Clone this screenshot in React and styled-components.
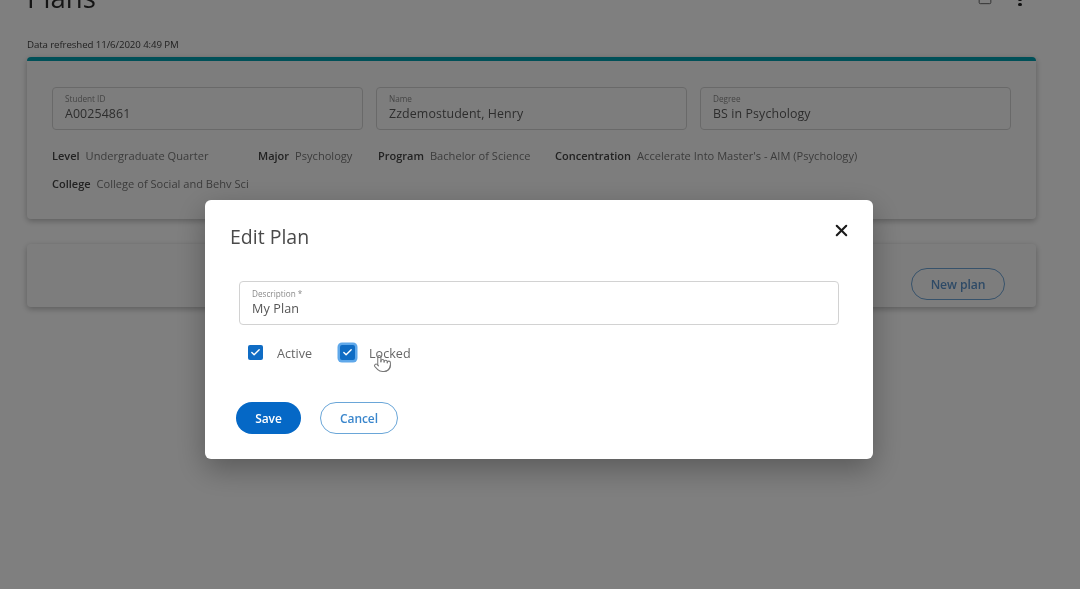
import React from "react";
import styled, { createGlobalStyle } from "styled-components";
import { X, Pointer, Check, Mail } from "lucide-react";

const Global = createGlobalStyle`
  html, body { margin: 0; height: 100%; overflow: hidden; background: #fff; }
  body { font-family: "Open Sans", "Noto Sans", sans-serif; color: #2b2b2b; }
`;
const Page = styled.div`
  width: 1080px; height: 589px; box-sizing: border-box; padding: 0 44px 0 27px; overflow: hidden;
  filter: blur(0.5px);
`;
const Header = styled.header`
  display: flex; align-items: flex-end; justify-content: space-between; height: 30px; margin-top: -22px;
`;
const Title = styled.h1`
  margin: 0; font-size: 27.5px; font-weight: 400; line-height: 20px; color: #2a2a2a;
`;
const HeaderTools = styled.div`
  display: flex; align-items: flex-end; gap: 26px; margin-right: 14px; margin-bottom: 2px; color: #444;
`;
const Dots = styled.span`
  display: flex; flex-direction: column; gap: 1.6px; width: 4px; align-items: center;
  i { width: 3.2px; height: 3.2px; border-radius: 50%; background: #222; display: block; }
`;
const Refreshed = styled.p`
  margin: 30px 0 0; font-size: 9.7px; line-height: 13px; color: #444; letter-spacing: -0.1px;
`;
const Card = styled.section`
  margin-top: ${p => p.$top}px; box-sizing: border-box; height: ${p => p.$h}px; background: #fbfbfb; border-radius: 4px;
  border-top: ${p => (p.$accent ? "4px solid #00a0b0" : "0")};
  box-shadow: 0 2px 6px rgba(0,0,0,.28);
`;
const InfoBody = styled.div`
  padding: 26px 25px 0;
`;
const Fields = styled.div`
  display: grid; grid-template-columns: repeat(3, 311px); gap: 13px;
`;
const Field = styled.div`
  box-sizing: border-box; height: ${p => p.$h || 43}px; border: 1px solid #d3d3d3; border-radius: 4px;
  padding: 6px 12px;
`;
const FieldLabel = styled.div`
  font-size: 8.2px; line-height: 10px; color: #8a8a8a;
`;
const FieldValue = styled.div`
  font-size: 12.4px; line-height: 19px; color: #5a5a5a; letter-spacing: 0.1px;
`;
const Details = styled.div`
  display: flex; margin-top: 19px; height: 14px; align-items: center;
`;
const DetailsRow2 = styled(Details)`
  margin-top: 14px;
`;
const Detail = styled.div`
  width: ${p => (p.$w ? `${p.$w}px` : "auto")}; font-size: 11.1px; line-height: 14px; color: #777; white-space: nowrap;
  b { color: #444; font-weight: 600; font-size: 11px; margin-right: 6px; }
`;
const ActionBody = styled.div`
  display: flex; justify-content: flex-end; padding: 24px 31px 0 0;
`;
const Pill = styled.button`
  box-sizing: border-box; width: ${p => p.$w}px; height: ${p => p.$h}px; border-radius: 17px; font: 600 12px "Open Sans", sans-serif;
  letter-spacing: -0.1px; padding: 0;
  color: ${p => (p.$solid ? "#fff" : "#3a86cc")};
  background: ${p => (p.$solid ? "#0568c6" : "transparent")};
  border: ${p => (p.$solid ? "0" : "1.5px solid #6aa6d8")};
`;
const NewPlan = styled(Pill)`
  color: #5c94cc; border-color: #6ea4d6; font-size: 12.2px;
`;
const Overlay = styled.div`
  position: fixed; inset: 0; background: rgba(0,0,0,.5); display: flex; justify-content: flex-start;
  padding: 200px 0 0 205px;
`;
const Dialog = styled.div`
  position: relative; box-sizing: border-box; width: 668px; height: 259px; background: #fff; border-radius: 6px;
  box-shadow: 0 10px 30px rgba(0,0,0,.3); padding: 23px 25px 0 31px; filter: blur(0.4px);
`;
const DialogTitle = styled.h2`
  margin: 0 0 0 -6px; font-size: 19.5px; line-height: 27px; font-weight: 400; color: #4a4a4a;
`;
const CloseBtn = styled.button`
  position: absolute; top: 19px; right: 21px; width: 22px; height: 22px; padding: 0; border: 0; background: none; color: #1a1a1a;
  display: flex; align-items: center; justify-content: center;
`;
const DescField = styled(Field)`
  width: 600px; margin: 31px 0 0 3px; border-width: 1.5px; border-color: #d2d2d2; padding: 7px 12px;
`;
const DescLabel = styled(FieldLabel)`
  color: #8a8a8a;
`;
const DescValue = styled(FieldValue)`
  color: #555; font-size: 12.6px; line-height: 18px; margin-top: 1px;
`;
const Checks = styled.div`
  display: flex; align-items: center; margin: 19px 0 0 12px; height: 18px;
`;
const Box = styled.span`
  box-sizing: border-box; width: 15px; height: 15px; background: #0f6cc4; border-radius: 2px; color: #fff;
  display: flex; align-items: center; justify-content: center; flex: none; margin-bottom: 1px;
  box-shadow: ${p => (p.$focus ? "0 0 0 2.5px #5fa8ea" : "none")};
`;
const CheckLabel = styled.span`
  position: relative; font-size: 12.6px; line-height: 16px; color: #666; margin-left: 14px; padding-top: 2px;
  margin-right: ${p => p.$mr || 0}px;
`;
const Hand = styled.span`
  position: absolute; left: 4px; top: 10px; color: #777; display: flex;
`;
const Buttons = styled.div`
  display: flex; align-items: center; gap: 19px; margin: 40px 0 0 0;
`;

const Item = ({ k, v, w }) => (<Detail $w={w}><b>{k}</b>{v}</Detail>);

export default function App() {
  return (
    <>
      <Global />
      <Page>
        <Header>
          <Title>Plans</Title>
          <HeaderTools>
            <Mail size={14} strokeWidth={1.4} />
            <Dots><i /><i /><i /></Dots>
          </HeaderTools>
        </Header>
        <Refreshed>Data refreshed 11/6/2020 4:49 PM</Refreshed>
        <Card $top={6} $h={162} $accent>
          <InfoBody>
            <Fields>
              <Field><FieldLabel>Student ID</FieldLabel><FieldValue>A00254861</FieldValue></Field>
              <Field><FieldLabel>Name</FieldLabel><FieldValue>Zzdemostudent, Henry</FieldValue></Field>
              <Field><FieldLabel>Degree</FieldLabel><FieldValue>BS in Psychology</FieldValue></Field>
            </Fields>
            <Details>
              <Item k="Level" v="Undergraduate Quarter" w={206} />
              <Item k="Major" v="Psychology" w={120} />
              <Item k="Program" v="Bachelor of Science" w={177} />
              <Item k="Concentration" v="Accelerate Into Master's - AIM (Psychology)" />
            </Details>
            <DetailsRow2>
              <Item k="College" v="College of Social and Behv Sci" />
            </DetailsRow2>
          </InfoBody>
        </Card>
        <Card $top={25} $h={63}>
          <ActionBody><NewPlan $w={94} $h={32}>New plan</NewPlan></ActionBody>
        </Card>
      </Page>
      <Overlay>
        <Dialog>
          <DialogTitle>Edit Plan</DialogTitle>
          <CloseBtn aria-label="Close"><X size={19} strokeWidth={2.6} /></CloseBtn>
          <DescField $h={44}>
            <DescLabel>Description *</DescLabel>
            <DescValue>My Plan</DescValue>
          </DescField>
          <Checks>
            <Box><Check size={11} strokeWidth={3} /></Box>
            <CheckLabel $mr={28}>Active</CheckLabel>
            <Box $focus><Check size={11} strokeWidth={3} /></Box>
            <CheckLabel>
              Locked
              <Hand><Pointer size={19} strokeWidth={1.3} /></Hand>
            </CheckLabel>
          </Checks>
          <Buttons>
            <Pill $solid $w={65} $h={32}>Save</Pill>
            <Pill $w={78} $h={32}>Cancel</Pill>
          </Buttons>
        </Dialog>
      </Overlay>
    </>
  );
}
